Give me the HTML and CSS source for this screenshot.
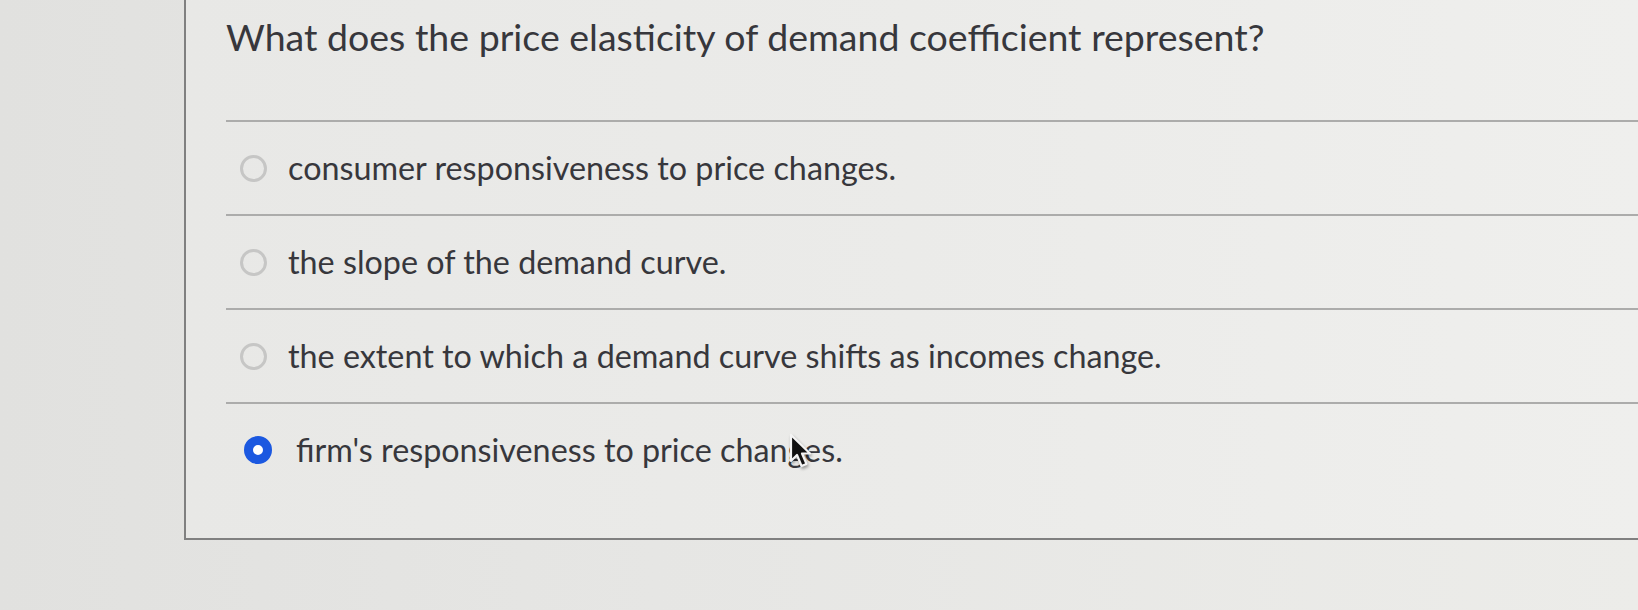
FILE: index.html
```html
<!DOCTYPE html>
<html>
<head>
<meta charset="utf-8">
<link rel="stylesheet" href="styles.css">
</head>
<body>
<div class="page">
  <div class="gutter"></div>
  <div class="card">
    <h1 class="question">What does the price elasticity of demand coefficient represent?</h1>
    <div class="options">
      <label class="option"><span class="radio"></span><span class="text">consumer responsiveness to price changes.</span></label>
      <label class="option"><span class="radio"></span><span class="text">the slope of the demand curve.</span></label>
      <label class="option"><span class="radio"></span><span class="text">the extent to which a demand curve shifts as incomes change.</span></label>
      <label class="option"><span class="radio checked"></span><span class="text">firm's responsiveness to price changes.</span></label>
    </div>
  </div>
</div>
<svg class="cursor" width="24" height="36" viewBox="0 0 24 36"><path d="M2 2 L2 28 L8 22 L12.5 33 L17.5 31 L13 20.5 L21 20.5 Z" fill="#111" stroke="#f4f4f4" stroke-width="2.2" stroke-linejoin="round"/></svg>
</body>
</html>
```
FILE: styles.css
```css
html, body {
  margin: 0;
  padding: 0;
  height: 610px;
  overflow: hidden;
}
body {
  background: linear-gradient(90deg, #e1e1df 0%, #e6e6e4 40%, #ecece9 100%);
  font-family: Lato, "Open Sans", sans-serif;
  color: #37373c;
  position: relative;
}
.page {
  display: flex;
  height: 540px;
}
.gutter {
  width: 184px;
  flex: none;
}
.card {
  flex: 1;
  border-left: 2px solid #808080;
  border-bottom: 2px solid #808080;
  padding-left: 40px;
  background: linear-gradient(90deg, #e8e8e6 0%, #ebebe9 50%, #efefed 100%);
}
.question {
  margin: 14px 0 0 0;
  font-size: 37.5px;
  font-weight: 400;
  line-height: 46px;
  letter-spacing: 0;
}
.options {
  margin-top: 60px;
}
.option {
  display: flex;
  align-items: center;
  height: 92px;
  border-top: 2px solid #acacab;
  padding-left: 14px;
}
.radio {
  width: 27px;
  height: 27px;
  border: 3px solid #c6c6c5;
  border-radius: 50%;
  box-sizing: border-box;
  flex: none;
  margin-right: 21px;
  background: transparent;
}
.radio.checked {
  border: 9px solid #1b58e0;
  background: #fff;
  width: 28px;
  height: 28px;
  margin-left: 4px;
  margin-right: 24px;
}
.text {
  font-size: 32.3px;
  line-height: 40px;
}
.cursor {
  position: absolute;
  left: 789px;
  top: 433px;
  filter: drop-shadow(1px 2px 1.5px rgba(0, 0, 0, 0.35));
}
```
